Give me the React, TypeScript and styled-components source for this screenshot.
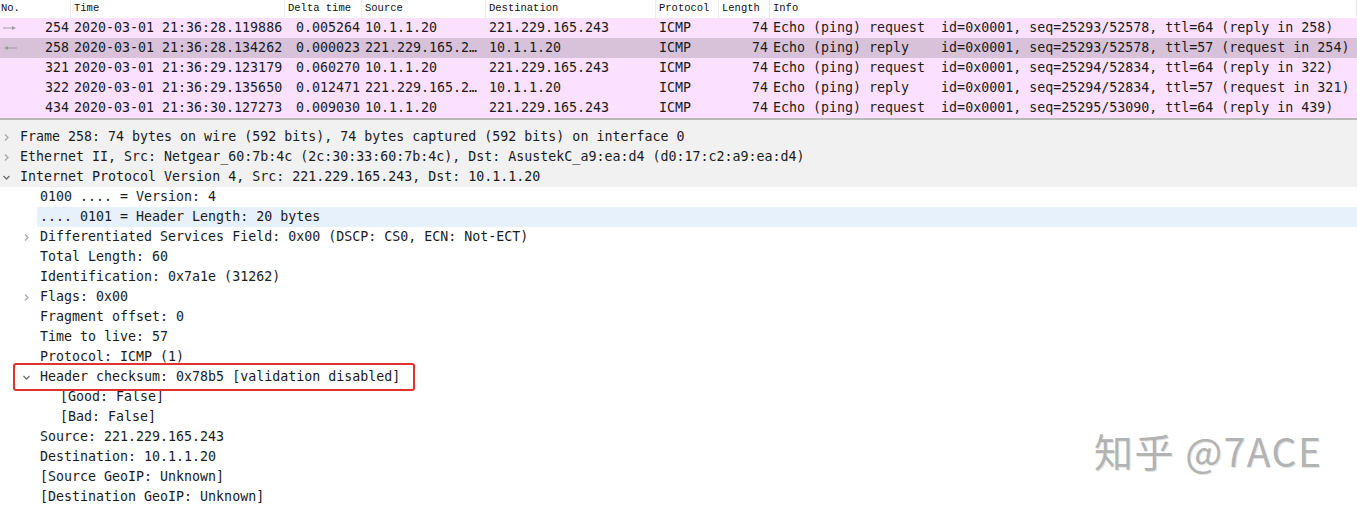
import React from "react";
import styled, { createGlobalStyle } from "styled-components";

const Global = createGlobalStyle`
  html, body { margin: 0; padding: 0; background: #fff; overflow: hidden; }
  body { font-family: "DejaVu Sans Mono", "Liberation Mono", monospace; }
`;

const Page = styled.div`
  position: relative;
  width: 1357px;
  height: 507px;
  overflow: hidden;
  background: #fff;
  color: #1b1b1b;
`;

const cols = [
  { key: "no", title: "No.", w: 71, align: "right" },
  { key: "time", title: "Time", w: 214, align: "left" },
  { key: "delta", title: "Delta time", w: 77, align: "right" },
  { key: "src", title: "Source", w: 124, align: "left" },
  { key: "dst", title: "Destination", w: 170, align: "left" },
  { key: "proto", title: "Protocol", w: 63, align: "left" },
  { key: "len", title: "Length", w: 51, align: "right" },
  { key: "info", title: "Info", w: 0, align: "left" },
] as const;

const HeaderRow = styled.div`
  display: flex;
  height: 18px;
  background: #fff;
`;

const HeaderCell = styled.div<{ $w: number; $first?: boolean }>`
  ${(p) => (p.$w ? `width: ${p.$w}px; flex: none;` : "flex: 1;")}
  box-sizing: border-box;
  padding-left: ${(p) => (p.$first ? 1 : 3)}px;
  font-family: "Liberation Mono", monospace;
  font-size: 10.5px;
  line-height: 17px;
  color: #111;
  border-right: 1px solid #ececec;
  white-space: nowrap;
`;

const PacketRow = styled.div<{ $selected?: boolean }>`
  display: flex;
  height: 20px;
  background: ${(p) => (p.$selected ? "#d8c2d9" : "#fce0ff")};
  font-size: 13.3px;
  line-height: 20px;
  white-space: nowrap;
`;

const Cell = styled.div<{ $w: number; $align: string }>`
  ${(p) => (p.$w ? `width: ${p.$w}px; flex: none;` : "flex: 1;")}
  box-sizing: border-box;
  position: relative;
  padding: 0 2px 0 3px;
  text-align: ${(p) => p.$align};
  overflow: hidden;
`;

const RelArrow = styled.svg`
  position: absolute;
  left: 2px;
  top: 7px;
`;

const Divider = styled.div`
  height: 2px;
  background: #a9a9a9;
  opacity: 0.8;
`;

const DetailPane = styled.div`
  display: flex;
  flex-direction: column;
`;

const DetailRow = styled.div<{ $level: number; $shade?: boolean; $first?: boolean }>`
  display: flex;
  align-items: stretch;
  height: 20px;
  padding-top: ${(p) => (p.$first ? 7 : 0)}px;
  padding-left: ${(p) => p.$level * 20}px;
  background: ${(p) => (p.$shade ? "#f1f1f1" : "transparent")};
  font-size: 13.3px;
  line-height: 20px;
  white-space: nowrap;
`;

const Toggle = styled.div`
  width: 17px;
  flex: none;
  display: flex;
  align-items: center;
  justify-content: flex-start;
  padding-left: 2px;
  box-sizing: border-box;
`;

const Label = styled.div<{ $hl?: boolean }>`
  flex: 1;
  padding-left: 3px;
  background: ${(p) => (p.$hl ? "#e6f1fb" : "transparent")};
`;

const BottomLine = styled.div`
  height: 1px;
  margin-left: 16px;
  background: #e4e4e4;
`;

const RedBox = styled.div`
  position: absolute;
  left: 13px;
  top: 363px;
  width: 402px;
  height: 28px;
  box-sizing: border-box;
  border: 2px solid #e2322d;
  border-radius: 3px;
  pointer-events: none;
`;

const Watermark = styled.div`
  position: absolute;
  left: 1094px;
  top: 424px;
  font-family: "Noto Sans CJK SC", "Noto Sans", sans-serif;
  font-size: 39px;
  line-height: 52px;
  color: #b3b3b3;
  text-shadow: 1px 1px 0 #e6e6e6;
  white-space: nowrap;
  letter-spacing: 1.5px;
`;

const Chevron = ({ open }: { open?: boolean }) =>
  open ? (
    <svg width="9" height="9" viewBox="0 0 9 9">
      <path d="M1.5 3 L4.5 6 L7.5 3" fill="none" stroke="#6f6f6f" strokeWidth="1.3" />
    </svg>
  ) : (
    <svg width="9" height="9" viewBox="0 0 9 9">
      <path d="M3 1.5 L6 4.5 L3 7.5" fill="none" stroke="#a8a8a8" strokeWidth="1.3" />
    </svg>
  );

type Pkt = { rel?: "req" | "rep"; sel?: boolean; v: string[] };

const packets: Pkt[] = [
  { rel: "req", v: ["254", "2020-03-01 21:36:28.119886", "0.005264", "10.1.1.20", "221.229.165.243", "ICMP", "74", "Echo (ping) request  id=0x0001, seq=25293/52578, ttl=64 (reply in 258)"] },
  { rel: "rep", sel: true, v: ["258", "2020-03-01 21:36:28.134262", "0.000023", "221.229.165.2\u2026", "10.1.1.20", "ICMP", "74", "Echo (ping) reply    id=0x0001, seq=25293/52578, ttl=57 (request in 254)"] },
  { v: ["321", "2020-03-01 21:36:29.123179", "0.060270", "10.1.1.20", "221.229.165.243", "ICMP", "74", "Echo (ping) request  id=0x0001, seq=25294/52834, ttl=64 (reply in 322)"] },
  { v: ["322", "2020-03-01 21:36:29.135650", "0.012471", "221.229.165.2\u2026", "10.1.1.20", "ICMP", "74", "Echo (ping) reply    id=0x0001, seq=25294/52834, ttl=57 (request in 321)"] },
  { v: ["434", "2020-03-01 21:36:30.127273", "0.009030", "10.1.1.20", "221.229.165.243", "ICMP", "74", "Echo (ping) request  id=0x0001, seq=25295/53090, ttl=64 (reply in 439)"] },
];

type Det = { t: string; level: number; tog?: "open" | "closed"; shade?: boolean; hl?: boolean };

const details: Det[] = [
  { t: "Frame 258: 74 bytes on wire (592 bits), 74 bytes captured (592 bits) on interface 0", level: 0, tog: "closed", shade: true },
  { t: "Ethernet II, Src: Netgear_60:7b:4c (2c:30:33:60:7b:4c), Dst: AsustekC_a9:ea:d4 (d0:17:c2:a9:ea:d4)", level: 0, tog: "closed", shade: true },
  { t: "Internet Protocol Version 4, Src: 221.229.165.243, Dst: 10.1.1.20", level: 0, tog: "open", shade: true },
  { t: "0100 .... = Version: 4", level: 1 },
  { t: ".... 0101 = Header Length: 20 bytes", level: 1, hl: true },
  { t: "Differentiated Services Field: 0x00 (DSCP: CS0, ECN: Not-ECT)", level: 1, tog: "closed" },
  { t: "Total Length: 60", level: 1 },
  { t: "Identification: 0x7a1e (31262)", level: 1 },
  { t: "Flags: 0x00", level: 1, tog: "closed" },
  { t: "Fragment offset: 0", level: 1 },
  { t: "Time to live: 57", level: 1 },
  { t: "Protocol: ICMP (1)", level: 1 },
  { t: "Header checksum: 0x78b5 [validation disabled]", level: 1, tog: "open" },
  { t: "[Good: False]", level: 2 },
  { t: "[Bad: False]", level: 2 },
  { t: "Source: 221.229.165.243", level: 1 },
  { t: "Destination: 10.1.1.20", level: 1 },
  { t: "[Source GeoIP: Unknown]", level: 1 },
  { t: "[Destination GeoIP: Unknown]", level: 1 },
];

const Arrow = ({ dir }: { dir: "req" | "rep" }) => (
  <RelArrow width="16" height="6" viewBox="0 0 16 6">
    {dir === "req" ? (
      <>
        <line x1="1" y1="3" x2="12" y2="3" stroke="#9a9a9a" strokeWidth="1" />
        <path d="M10 1 L14 3 L10 5 Z" fill="#9a9a9a" />
      </>
    ) : (
      <>
        <line x1="4" y1="3" x2="15" y2="3" stroke="#9a9a9a" strokeWidth="1" />
        <path d="M6 1 L2 3 L6 5 Z" fill="#9a9a9a" />
      </>
    )}
  </RelArrow>
);

export default function App() {
  return (
    <Page>
      <Global />
      <HeaderRow>
        {cols.map((c, i) => (
          <HeaderCell key={c.key} $w={c.w} $first={i === 0}>
            {c.title}
          </HeaderCell>
        ))}
      </HeaderRow>
      {packets.map((p, r) => (
        <PacketRow key={r} $selected={p.sel}>
          {cols.map((c, i) => (
            <Cell key={c.key} $w={c.w} $align={c.align}>
              {i === 0 && p.rel ? <Arrow dir={p.rel} /> : null}
              {p.v[i].replace(/ /g, "\u00a0")}
            </Cell>
          ))}
        </PacketRow>
      ))}
      <Divider />
      <DetailPane>
        {details.map((d, i) => (
          <DetailRow key={i} $level={d.level} $shade={d.shade} $first={i === 0}>
            <Toggle>{d.tog ? <Chevron open={d.tog === "open"} /> : null}</Toggle>
            <Label $hl={d.hl}>{d.t}</Label>
          </DetailRow>
        ))}
        <BottomLine />
      </DetailPane>
      <RedBox />
      <Watermark>知乎 @7ACE</Watermark>
    </Page>
  );
}
